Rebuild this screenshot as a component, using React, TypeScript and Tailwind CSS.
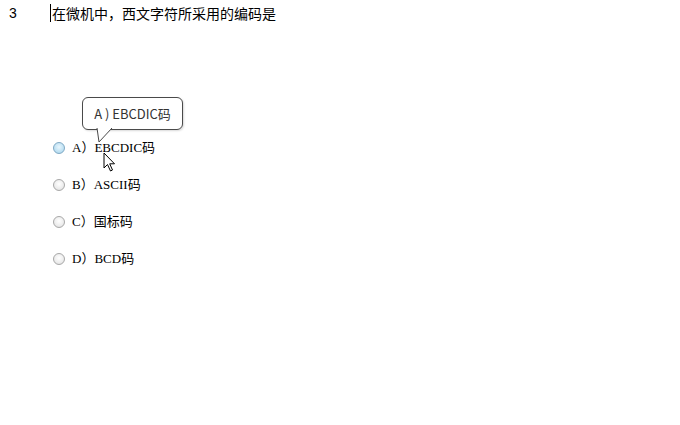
import React from 'react'

const options = [
    { key: 'A', text: 'EBCDIC码', hover: true },
    { key: 'B', text: 'ASCII码', hover: false },
    { key: 'C', text: '国标码', hover: false },
    { key: 'D', text: 'BCD码', hover: false },
]

function Radio({ hover }: { hover: boolean }) {
    return (
        <span
            className={`inline-block w-[12px] h-[12px] rounded-full border ${hover
                ? 'border-[#7fa9c4] bg-[radial-gradient(circle_at_50%_40%,#e8f6fd_0%,#bfe1f3_60%,#a6d2ea_100%)]'
                : 'border-[#a8a8a8] bg-[radial-gradient(circle_at_50%_40%,#ffffff_0%,#ececec_60%,#d8d8d8_100%)]'
                }`}
        />
    )
}

function Cursor() {
    return (
        <svg width="14" height="21" viewBox="0 0 14 21" className="absolute left-[103px] top-[152px]">
            <path
                d="M1 1 L1 16 L4.5 12.5 L7.5 19 L9.5 18 L6.7 11.8 L11.5 11.8 Z"
                fill="#fff"
                stroke="#000"
                strokeWidth="1"
                strokeLinejoin="miter"
            />
        </svg>
    )
}

export default function App() {
    return (
        <div className="relative w-[680px] h-[425px] bg-white text-black overflow-hidden font-['Noto_Sans_CJK_SC',sans-serif]">
            {/* Question header */}
            <div className="flex items-center pt-[4px] h-[22px] text-[14px] leading-[18px]">
                <span className="w-[50px] pl-[9px] font-['Liberation_Sans','Noto_Sans_CJK_SC',sans-serif]">3</span>
                <span className="border-l border-black pl-[1px]">在微机中，西文字符所采用的编码是</span>
            </div>

            {/* Options */}
            <div className="pt-[107px] pl-[53px]">
                {options.map((o) => (
                    <div key={o.key} className="flex items-center h-[37px] gap-[7px]">
                        <Radio hover={o.hover} />
                        <span className="text-[13px] leading-[15px] font-['Liberation_Serif','Noto_Sans_CJK_SC',serif]">
                            {o.key}）{o.text}
                        </span>
                    </div>
                ))}
            </div>

            {/* Tooltip */}
            <div className="absolute left-[82px] top-[97px]">
                <div className="w-[101px] h-[33px] rounded-[6px] border border-[#4a4a4a] bg-white flex items-center justify-center text-[13px] text-[#333] shadow-[1px_1px_2px_rgba(0,0,0,0.15)]">
                    A ) EBCDIC码
                </div>
                <svg width="20" height="16" viewBox="0 0 20 16" className="absolute left-[14px] top-[31px]">
                    <path d="M1 0 L3 14 L16 0" fill="#fff" stroke="#4a4a4a" strokeWidth="1" />
                </svg>
            </div>

            <Cursor />
        </div>
    )
}
